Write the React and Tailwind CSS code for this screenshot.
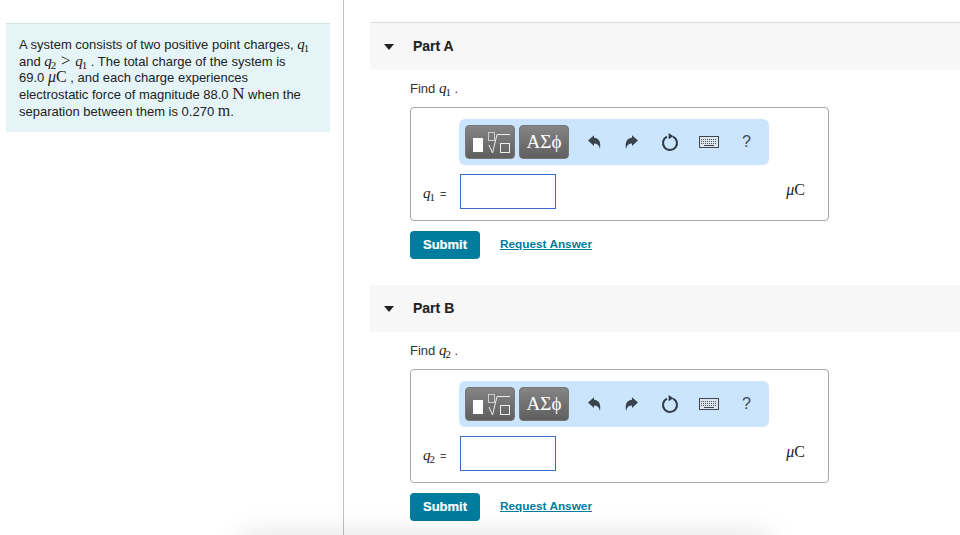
import React from 'react';

const mathFont = "font-['Liberation_Serif',serif]";

function Q({ n }) {
  return (
    <span className={`${mathFont} text-[15px] leading-[0] text-[#222]`}>
      <i>q</i>
      <sub className="static text-[11px] align-[-3px] leading-[0] -ml-px">{n}</sub>
    </span>
  );
}

function M({ children, className }) {
  return <span className={`${mathFont} leading-[0] ${className}`}>{children}</span>;
}

function Line({ children }) {
  return <div className="h-[16.7px] whitespace-nowrap">{children}</div>;
}

function MathIcon() {
  return (
    <svg width="48" height="34" viewBox="0 0 48 34" fill="none">
      <rect x="7" y="13" width="10" height="14" fill="#fff" />
      <rect x="22.5" y="7.5" width="6" height="8" stroke="#ccc" />
      <path d="M23 20l3.5 8L31 9.5h13" stroke="#eee" strokeWidth="1" />
      <rect x="34.5" y="18.5" width="9" height="9" stroke="#eee" />
    </svg>
  );
}

function Undo({ flip }) {
  return (
    <svg width="16" height="16" viewBox="0 0 16 16" className={flip ? '-scale-x-100' : ''}>
      <path
        d="M2 6.5L8 1.2v2.6C12 3.8 15.4 7 14 15 13.2 11.2 11.2 9.5 8 9.5v2.6z"
        fill="#3a424b"
      />
    </svg>
  );
}

function Reset() {
  return (
    <svg width="20" height="20" viewBox="0 0 20 20" fill="none">
      <path d="M7 4.6A7 7 0 1 0 13 4.6" stroke="#2f3a44" strokeWidth="2" />
      <path d="M8.6 1L13.4 4.2 8.6 7.2z" fill="#2f3a44" />
    </svg>
  );
}

function Keyboard() {
  return (
    <svg width="20" height="12" viewBox="0 0 20 12" fill="none">
      <rect x="0.5" y="0.5" width="19" height="11" fill="#dfe5ec" stroke="#3f4750" />
      <path d="M2 3.5h16M2 5.5h16M2 7.5h16" stroke="#4a535c" strokeDasharray="1 1" />
      <path d="M5 9.5h10" stroke="#3f4750" />
    </svg>
  );
}

function Toolbar() {
  return (
    <div className="ml-[48px] w-[310px] h-[46px] bg-[#cce5ff] rounded-md flex items-center pl-[6px]">
      <div className="w-[50px] h-[34px] rounded bg-gradient-to-b from-[#858585] to-[#5f5f5f] border border-[#777] flex items-center justify-center">
        <MathIcon />
      </div>
      <div className={`ml-[4px] w-[50px] h-[34px] rounded bg-gradient-to-b from-[#858585] to-[#5f5f5f] border border-[#777] flex items-center justify-center text-white text-[19px] ${mathFont}`}>
        ΑΣϕ
      </div>
      <div className="ml-[17px] w-[16px] flex justify-center"><Undo /></div>
      <div className="ml-[22px] w-[16px] flex justify-center"><Undo flip /></div>
      <div className="ml-[20px] w-[20px] flex justify-center"><Reset /></div>
      <div className="ml-[19px] w-[20px] flex justify-center"><Keyboard /></div>
      <div className="ml-[23px] text-[16px] text-[#3f4750]">?</div>
    </div>
  );
}

function Part({ label, n, first }) {
  return (
    <section>
      <div className={`bg-[#f7f7f7] flex items-center ${first ? 'h-[48px] border-t border-[#dcdcdc]' : 'h-[47px]'}`}>
        <div className="ml-[14px] w-0 h-0 border-x-[5.5px] border-x-transparent border-t-[6px] border-t-[#222]" />
        <h2 className="ml-[19px] text-[14px] font-bold text-[#222] [-webkit-text-stroke:0.1px]">Part {label}</h2>
      </div>
      <div className="pl-[40px]">
        <p className="mt-[9px] h-[28px] text-[13px] leading-[20px] text-[#333]">
          Find <Q n={n} /> .
        </p>
        <div className="w-[419px] h-[114px] border border-[#a8a8a8] rounded pt-[11px]">
          <Toolbar />
          <div className="flex items-center mt-[9px]">
            <div className="w-[49px] pl-[12px] mt-[4px] whitespace-nowrap text-[11px] leading-[14px] text-[#444]">
              <Q n={n} /> <span className="ml-[2px]">=</span>
            </div>
            <div className="w-[96px] h-[35px] border border-[#3a6cc8] bg-white" />
            <div className={`ml-auto mr-[23px] mb-[4px] text-[16px] text-[#222] ${mathFont}`}>
              <i>μ</i>C
            </div>
          </div>
        </div>
        <div className="flex items-center mt-[10px]">
          <button className="w-[70px] h-[28px] bg-[#007c9e] rounded-sm text-white text-[13px] font-bold [-webkit-text-stroke:0.2px]">
            Submit
          </button>
          <a className="ml-[20px] text-[11.8px] font-bold text-[#007c9e] underline">Request Answer</a>
        </div>
      </div>
    </section>
  );
}

export default function App() {
  return (
    <div className="relative h-[535px] w-[960px] overflow-hidden bg-white font-['Liberation_Sans',sans-serif]">
      <div className="flex h-full">
        <aside className="w-[344px] h-full border-r border-[#b9c2cb] pt-[23px] pl-[6px]">
          <div className="w-[324px] h-[109px] bg-[#e5f5f7] border-t border-[#d5e2e5] pl-[13px] pt-[13px] text-[13px] leading-[16.6px] text-[#222]">
            <Line>A system consists of two positive point charges, <Q n="1" /></Line>
            <Line>and <Q n="2" /> <M className="text-[17px] mx-[1px]">&gt;</M> <Q n="1" /> . The total charge of the system is</Line>
            <Line>69.0 <M className="text-[16px]"><i>μ</i>C</M> , and each charge experiences</Line>
            <Line>electrostatic force of magnitude 88.0 <M className="text-[17px]">N</M> when the</Line>
            <Line>separation between them is 0.270 <M className="text-[16px]">m</M>.</Line>
          </div>
        </aside>
        <main className="flex-1 pt-[22px] pl-[26px]">
          <Part label="A" n="1" first />
          <div className="h-[26px]" />
          <Part label="B" n="2" />
        </main>
      </div>
      <div className="absolute left-[240px] right-[190px] bottom-[-30px] h-[30px] shadow-[0_0_30px_rgba(0,0,0,0.12)]" />
    </div>
  );
}
